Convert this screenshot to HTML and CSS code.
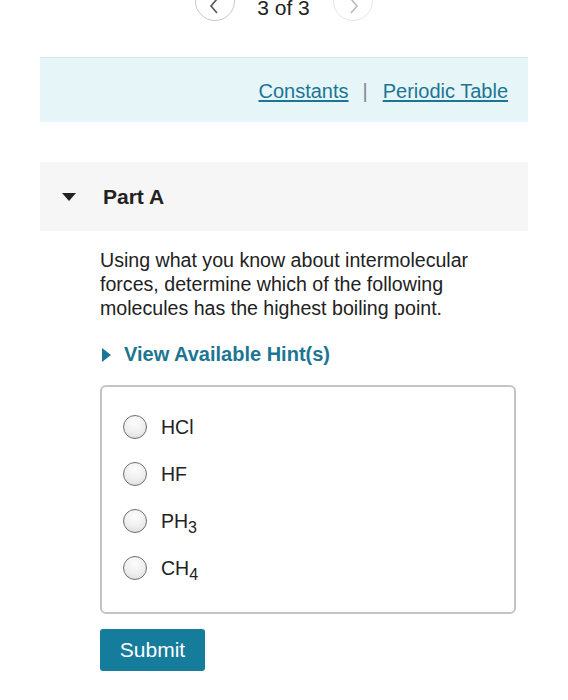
FILE: index.html
```html
<!DOCTYPE html>
<html>
<head>
<meta charset="utf-8">
<link rel="stylesheet" href="styles.css">
</head>
<body>
<div class="pager">
  <span class="circ prev"><svg width="14" height="16" viewBox="0 0 14 16"><path d="M9 1 L3 8 L9 15" fill="none" stroke="#555" stroke-width="1.6"/></svg></span>
  <span class="count">3 of 3</span>
  <span class="circ next"><svg width="14" height="16" viewBox="0 0 14 16"><path d="M5 1 L11 8 L5 15" fill="none" stroke="#bbb" stroke-width="1.6"/></svg></span>
</div>
<div class="tools">
  <a class="link">Constants</a>
  <span class="sep">|</span>
  <a class="link">Periodic Table</a>
</div>
<div class="parthead">
  <span class="tri-down"></span>
  <span class="parttitle">Part A</span>
</div>
<div class="content">
  <p class="question">Using what you know about intermolecular forces, determine which of the following molecules has the highest boiling point.</p>
  <div class="hint"><span class="tri-right"></span><span>View Available Hint(s)</span></div>
  <div class="options">
    <label class="opt"><span class="radio"></span><span>HCl</span></label>
    <label class="opt"><span class="radio"></span><span>HF</span></label>
    <label class="opt"><span class="radio"></span><span>PH<sub>3</sub></span></label>
    <label class="opt"><span class="radio"></span><span>CH<sub>4</sub></span></label>
  </div>
  <button class="submit">Submit</button>
</div>
</body>
</html>
```
FILE: styles.css
```css
html, body {
  margin: 0;
  padding: 0;
  background: #fff;
  font-family: "Liberation Sans", Arial, sans-serif;
  color: #222;
}
.pager {
  height: 57px;
  display: flex;
  justify-content: center;
  align-items: flex-start;
}
.circ {
  width: 40px;
  height: 40px;
  border-radius: 50%;
  margin-top: -19px;
  display: flex;
  align-items: flex-end;
  justify-content: center;
  box-sizing: border-box;
}
.circ svg { margin-bottom: 6px; }
.prev { border: 1px solid #c8c8c8; }
.next { border: 1px solid #e6e6e6; }
.count {
  font-size: 21px;
  line-height: 21px;
  margin: -3px 23px 0 22px;
  color: #222;
}
.tools {
  margin: 0 40px;
  height: 65px;
  background: #e6f5f7;
  border-top: 1px solid #dde6e8;
  box-sizing: border-box;
  display: flex;
  justify-content: flex-end;
  align-items: center;
  padding-right: 20px;
  padding-top: 2px;
  font-size: 20px;
}
.link {
  color: #1b7593;
  text-decoration: underline;
  text-underline-offset: 2px;
}
.sep {
  color: #888;
  margin: 0 15px 0 14px;
}
.parthead {
  margin: 40px 40px 0;
  height: 69px;
  background: #f6f6f6;
  display: flex;
  align-items: center;
}
.tri-down {
  width: 0;
  height: 0;
  border-left: 7px solid transparent;
  border-right: 7px solid transparent;
  border-top: 8px solid #222;
  margin-left: 22px;
  margin-right: 27px;
  margin-top: 1px;
}
.parttitle {
  font-weight: bold;
  font-size: 21px;
  color: #222;
}
.content {
  padding: 0 52px 0 100px;
}
.question {
  margin: 17px 0 0;
  max-width: 395px;
  font-size: 19.6px;
  line-height: 24px;
  color: #222;
}
.hint {
  margin-top: 23px;
  display: flex;
  align-items: center;
  font-size: 20px;
  font-weight: bold;
  color: #1b7593;
}
.tri-right {
  width: 0;
  height: 0;
  border-top: 7px solid transparent;
  border-bottom: 7px solid transparent;
  border-left: 9px solid #1b7593;
  margin-left: 2px;
  margin-right: 13px;
}
.options {
  margin-top: 19px;
  width: 416px;
  height: 229px;
  box-sizing: border-box;
  border: 2px solid #c4c4c4;
  border-radius: 6px;
  padding: 28px 0 0 21px;
  display: flex;
  flex-direction: column;
  gap: 23px;
}
.opt {
  display: flex;
  align-items: center;
  font-size: 19.5px;
  color: #222;
  height: 24px;
}
.opt sub {
  font-size: 16px;
  vertical-align: -5px;
  line-height: 0;
}
.radio {
  width: 24px;
  height: 24px;
  box-sizing: border-box;
  border: 1.5px solid #6e6e6e;
  border-radius: 50%;
  background: radial-gradient(circle at 50% 30%, #fdfdfd 0%, #eeeeee 55%, #d6d6d6 100%);
  margin-right: 14px;
}
.submit {
  margin-top: 15px;
  width: 105px;
  height: 42px;
  background: #167c9c;
  border: none;
  border-radius: 3px;
  color: #fff;
  font-family: "Liberation Sans", Arial, sans-serif;
  font-size: 21px;
  padding: 0;
}
```
